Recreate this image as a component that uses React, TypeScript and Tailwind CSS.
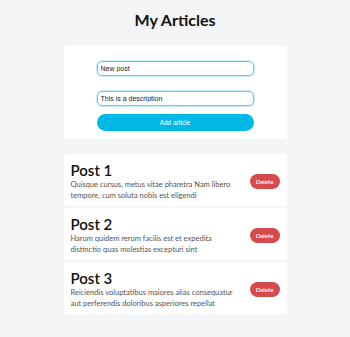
const posts = [
  {
    id: 1,
    title: 'Post 1',
    body: 'Quisque cursus, metus vitae pharetra Nam libero tempore, cum soluta nobis est eligendi',
  },
  {
    id: 2,
    title: 'Post 2',
    body: 'Harum quidem rerum facilis est et expedita distinctio quas molestias excepturi sint',
  },
  {
    id: 3,
    title: 'Post 3',
    body: 'Reiciendis voluptatibus maiores alias consequatur aut perferendis doloribus asperiores repellat',
  },
];

const App = () => {
  return (
    <div className="min-h-[337px] bg-[#f4f5f7] pt-[10px] font-['Lato',sans-serif]">
      <h1 className="text-center text-[16px] font-bold leading-[20px] text-[#111]">My Articles</h1>

      <div className="mx-auto mt-[16px] w-[223px]">
        {/* form */}
        <div className="rounded-[4px] bg-white px-[33px] pt-[15px] pb-[8px] font-['Liberation_Sans',sans-serif]">
          <input
            defaultValue="New post"
            className="block h-[15px] w-full rounded-[5px] border border-[#5fcdee] px-[3px] text-[7px] text-[#222] outline-none ring-1 ring-[#c5eefa]"
          />
          <input
            defaultValue="This is a description"
            className="mt-[15px] block h-[15px] w-full rounded-[5px] border border-[#5fcdee] px-[3px] text-[7px] text-[#222] outline-none ring-1 ring-[#c5eefa]"
          />
          <button className="mt-[8px] block h-[17px] w-full rounded-full bg-[#00b8e6] text-[6.5px] text-white">
            Add article
          </button>
        </div>

        {/* posts */}
        <div className="mt-[15px] flex flex-col gap-[2px]">
          {posts.map((post) => (
            <div key={post.id} className="flex items-center rounded-[4px] bg-white pl-[7px] pr-[7px] pt-[7px] pb-[5px]">
              <div className="flex-1">
                <h2 className="text-[15px] font-semibold leading-[18px] text-[#111]">{post.title}</h2>
                <p className="pr-[12px] text-[7.5px] leading-[11px] text-[#56534f]">{post.body}</p>
              </div>
              <button className="h-[15px] w-[30px] shrink-0 rounded-full bg-[#d64a4c] text-[6px] font-semibold text-white">
                Delete
              </button>
            </div>
          ))}
        </div>
      </div>
    </div>
  );
};

export default App;
